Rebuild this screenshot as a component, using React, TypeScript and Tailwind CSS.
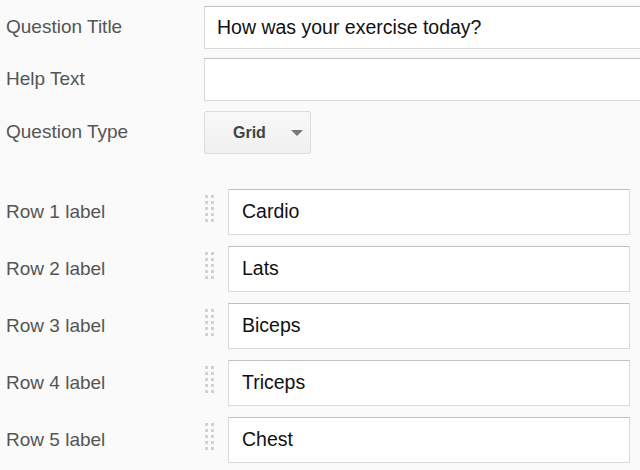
import React from 'react';

const rows = ['Cardio', 'Lats', 'Biceps', 'Triceps', 'Chest'];

const DragHandle: React.FC = () => (
  <div className="grid grid-cols-2 gap-x-[3px] gap-y-[3px] w-[9px]">
    {Array.from({ length: 10 }).map((_, i) => (
      <span key={i} className="block w-[3px] h-[3px] bg-[#d2d2d2]" />
    ))}
  </div>
);

const App: React.FC = () => {
  return (
    <div className="w-[640px] h-[470px] overflow-hidden bg-[#fafafa] font-['Arial','Liberation_Sans',sans-serif]">
      <div className="flex flex-col pt-[6px]">
        {/* Question title */}
        <div className="flex items-center h-[43px]">
          <label className="w-[204px] shrink-0 pl-[6px] text-[19px] text-[#555]">Question Title</label>
          <div className="flex items-center h-full w-[440px] shrink-0 bg-white border border-[#d9d9d9] border-t-[#c0c0c0] pl-[12px] text-[19.5px] text-[#111]">
            How was your exercise today?
          </div>
        </div>

        {/* Help text */}
        <div className="flex items-center h-[43px] mt-[9px]">
          <label className="w-[204px] shrink-0 pl-[6px] text-[19px] text-[#555]">Help Text</label>
          <div className="h-full w-[440px] shrink-0 bg-white border border-[#d9d9d9] border-t-[#c0c0c0]" />
        </div>

        {/* Question type */}
        <div className="flex items-center h-[43px] mt-[10px]">
          <label className="w-[204px] shrink-0 pl-[6px] text-[19px] text-[#555]">Question Type</label>
          <button className="flex items-center h-full w-[107px] pl-[28px] bg-gradient-to-b from-[#f8f8f8] to-[#f0f0f0] border border-[#dcdcdc] rounded-[2px] text-[16px] font-bold text-[#444]">
            <span>Grid</span>
            <svg className="ml-[25px]" width="12" height="6" viewBox="0 0 12 6">
              <path d="M0 0 L12 0 L6 6 Z" fill="#777" />
            </svg>
          </button>
        </div>

        {/* Row labels */}
        <div className="flex flex-col gap-[11px] mt-[35px]">
          {rows.map((value, i) => (
            <div key={value} className="flex items-center h-[46px]">
              <label className="w-[204px] shrink-0 pl-[6px] text-[19px] text-[#555]">Row {i + 1} label</label>
              <div className="w-[24px] h-full shrink-0 pl-[1px] pt-[6px]">
                <DragHandle />
              </div>
              <div className="flex items-center h-full w-[402px] bg-white border border-[#d9d9d9] border-t-[#c0c0c0] pl-[13px] text-[19.5px] text-[#111]">
                {value}
              </div>
            </div>
          ))}
        </div>
      </div>
    </div>
  );
};

export default App;
